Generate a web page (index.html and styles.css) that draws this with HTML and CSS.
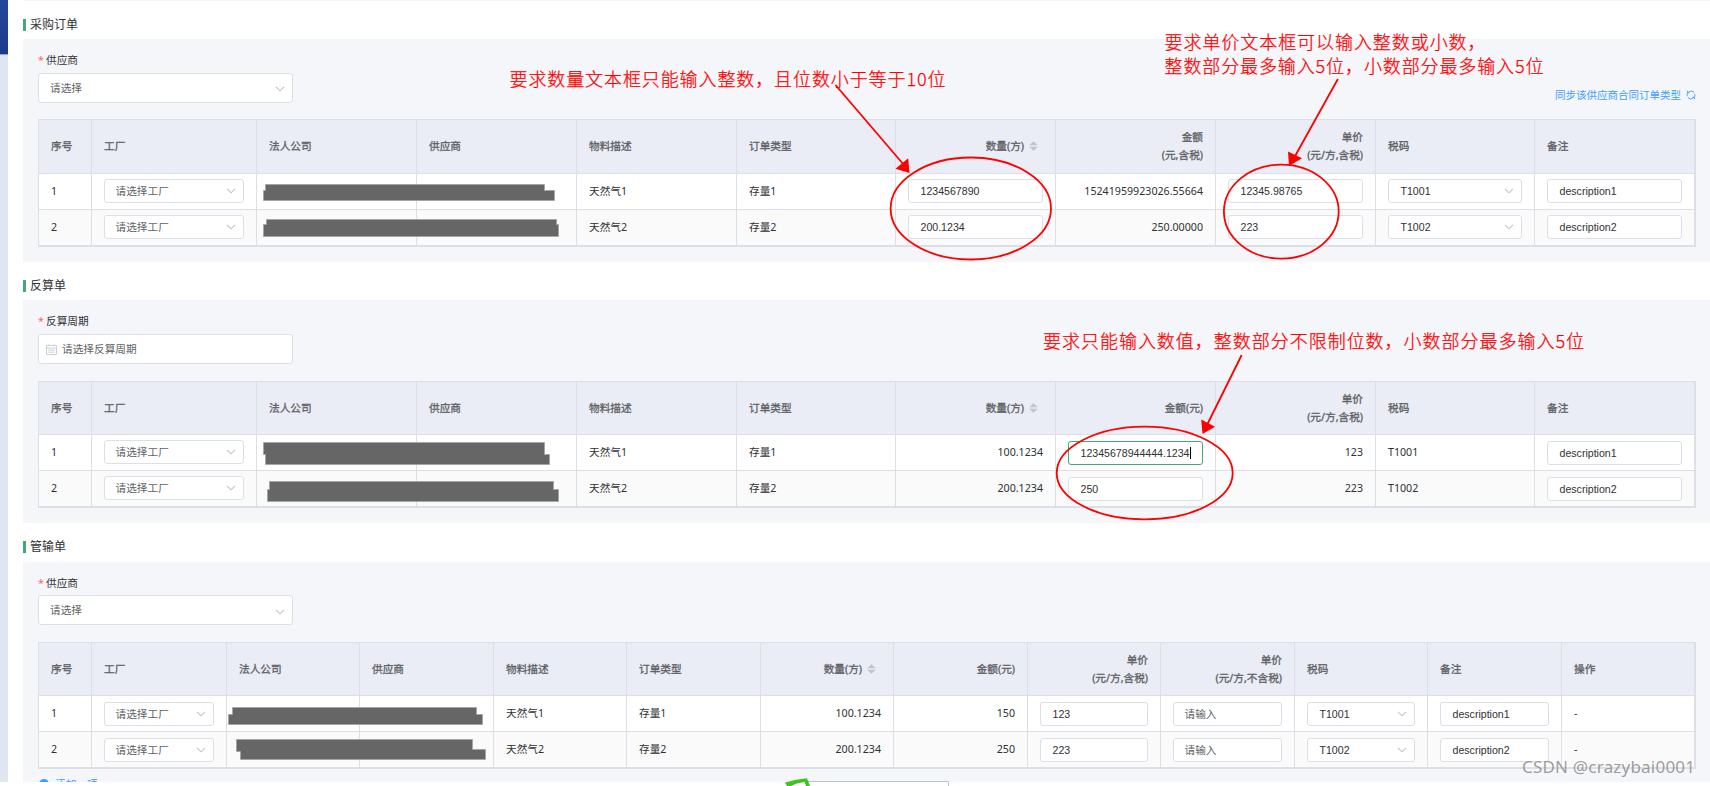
FILE: index.html
```
<!DOCTYPE html>
<html lang="zh-CN">
<head>
<meta charset="utf-8">
<title>采购订单</title>
<link rel="stylesheet" href="styles.css">
</head>
<body>
<svg width="0" height="0" class="defs">
  <symbol id="chev" viewBox="0 0 10 6"><path d="M1 .8 5 4.8 9 .8" fill="none" stroke="#c0c4cc" stroke-width="1.1"/></symbol>
  <symbol id="sort" viewBox="0 0 9 10"><path d="M4.500 .3 8.800 4.200H.2zM4.500 9.700 .2 5.800h8.600z" fill="#c0c4cc"/></symbol>
</svg>
<div class="page">
  <aside class="rail"><div class="rail-top"></div></aside>
  <main class="content">
    <div class="strip"></div>

    <h2 class="title">采购订单</h2>
    <section class="panel p1">
      <div class="label"><i>*</i>供应商</div>
      <div class="bar">
        <div class="field">请选择<svg class="chev"><use href="#chev"/></svg></div>
        <a class="sync">同步该供应商合同订单类型
          <svg width="10" height="10" viewBox="0 0 10 10" fill="none" stroke="#409eff" stroke-width=".9"><path d="M1.200 6.200A4 4 0 0 1 8 2.400M1.500 .8V2.800H3.500M8.800 3.800A4 4 0 0 1 2 7.600M8.500 9.200V7.200H6.500"/></svg>
        </a>
      </div>
      <div class="table cols-a">
        <div class="row head">
          <div>序号</div><div>工厂</div><div>法人公司</div><div>供应商</div><div>物料描述</div><div>订单类型</div>
          <div class="r">数量(方)<svg class="sort"><use href="#sort"/></svg></div><div class="r">金额<br>(元,含税)</div><div class="r">单价<br>(元/方,含税)</div><div>税码</div><div>备注</div>
        </div>
        <div class="row">
          <div>1</div><div><span class="in ph">请选择工厂<svg class="chev"><use href="#chev"/></svg></span></div><div></div><div></div><div>天然气1</div><div>存量1</div>
          <div><span class="in">1234567890</span></div><div class="r">15241959923026.55664</div><div><span class="in">12345.98765</span></div><div><span class="in">T1001<svg class="chev"><use href="#chev"/></svg></span></div><div><span class="in">description1</span></div>
        </div>
        <div class="row alt">
          <div>2</div><div><span class="in ph">请选择工厂<svg class="chev"><use href="#chev"/></svg></span></div><div></div><div></div><div>天然气2</div><div>存量2</div>
          <div><span class="in">200.1234</span></div><div class="r">250.00000</div><div><span class="in">223</span></div><div><span class="in">T1002<svg class="chev"><use href="#chev"/></svg></span></div><div><span class="in">description2</span></div>
        </div>
      </div>
    </section>

    <h2 class="title">反算单</h2>
    <section class="panel p2">
      <div class="label"><i>*</i>反算周期</div>
      <div class="field date">
        <svg width="11" height="11" viewBox="0 0 11 11" fill="none" stroke="#c6cad2" stroke-width=".9"><path d="M.5 1.500H10.500V10.500H.5zM.5 4H10.500M3 .3V2.200M8 .3V2.200M2.300 6H8.700M2.300 8.200H8.700"/></svg>请选择反算周期</div>
      <div class="table cols-a">
        <div class="row head">
          <div>序号</div><div>工厂</div><div>法人公司</div><div>供应商</div><div>物料描述</div><div>订单类型</div>
          <div class="r">数量(方)<svg class="sort"><use href="#sort"/></svg></div><div class="r">金额(元)</div><div class="r">单价<br>(元/方,含税)</div><div>税码</div><div>备注</div>
        </div>
        <div class="row">
          <div>1</div><div><span class="in ph">请选择工厂<svg class="chev"><use href="#chev"/></svg></span></div><div></div><div></div><div>天然气1</div><div>存量1</div>
          <div class="r">100.1234</div><div><span class="in low focus">12345678944444.1234<b class="caret"></b></span></div><div class="r">123</div><div>T1001</div><div><span class="in low">description1</span></div>
        </div>
        <div class="row alt">
          <div>2</div><div><span class="in ph">请选择工厂<svg class="chev"><use href="#chev"/></svg></span></div><div></div><div></div><div>天然气2</div><div>存量2</div>
          <div class="r">200.1234</div><div><span class="in low">250</span></div><div class="r">223</div><div>T1002</div><div><span class="in low">description2</span></div>
        </div>
      </div>
    </section>

    <h2 class="title tall">管输单</h2>
    <section class="panel p3">
      <div class="label"><i>*</i>供应商</div>
      <div class="field">请选择<svg class="chev"><use href="#chev"/></svg></div>
      <div class="table cols-b">
        <div class="row head">
          <div>序号</div><div>工厂</div><div>法人公司</div><div>供应商</div><div>物料描述</div><div>订单类型</div>
          <div class="r">数量(方)<svg class="sort"><use href="#sort"/></svg></div><div class="r">金额(元)</div><div class="r">单价<br>(元/方,含税)</div><div class="r">单价<br>(元/方,不含税)</div><div>税码</div><div>备注</div><div>操作</div>
        </div>
        <div class="row">
          <div>1</div><div><span class="in ph">请选择工厂<svg class="chev"><use href="#chev"/></svg></span></div><div></div><div></div><div>天然气1</div><div>存量1</div>
          <div class="r">100.1234</div><div class="r">150</div><div><span class="in">123</span></div><div><span class="in ph">请输入</span></div><div><span class="in">T1001<svg class="chev"><use href="#chev"/></svg></span></div><div><span class="in">description1</span></div><div>-</div>
        </div>
        <div class="row alt">
          <div>2</div><div><span class="in ph">请选择工厂<svg class="chev"><use href="#chev"/></svg></span></div><div></div><div></div><div>天然气2</div><div>存量2</div>
          <div class="r">200.1234</div><div class="r">250</div><div><span class="in">223</span></div><div><span class="in ph">请输入</span></div><div><span class="in">T1002<svg class="chev"><use href="#chev"/></svg></span></div><div><span class="in">description2</span></div><div>-</div>
        </div>
      </div>
      <div class="add"><svg width="10" height="10" viewBox="0 0 10 10"><circle cx="5" cy="5" r="5" fill="#409eff"/></svg>添加一项</div>
    </section>
  </main>
</div>

<svg class="marks" width="1710" height="786" viewBox="0 0 1710 786">
  <g fill="#666" stroke="#a6a6a6">
    <path d="M265.500 184.500H544.500V190.500H554.500V200.500H263.500V190.500H265.500z"/>
    <path d="M266.500 219.500H556.500V224.500H558.500V236.500H263.500V224.500H266.500z"/>
    <path d="M263.500 442.500H544.500V454.500H549.500V464.500H265.500V454.500H263.500z"/>
    <path d="M269.500 481.500H553.500V489.500H558.500V501.500H267.500V489.500H269.500z"/>
    <path d="M232.500 707.500H476.500V714.500H482.500V724.500H228.500V714.500H232.500z"/>
    <path d="M236.500 739.500H472.500V749.500H485.500V759.500H240.500V751.500H236.500z"/>
  </g>
  <g fill="none" stroke="#f00" stroke-width="1.800">
    <ellipse cx="970.800" cy="208.500" rx="80.200" ry="51"/>
    <ellipse cx="1281.300" cy="211.600" rx="57.400" ry="47"/>
    <ellipse cx="1144.700" cy="473" rx="88" ry="46.400"/>
    <path d="M835.500 85 904 165M1337.900 79 1294 158M1241.700 355 1206 427"/>
  </g>
  <path fill="#f00" d="M895.500 168.800 908.200 158.300 909.500 173zM1302 158.300 1288 151.500 1289 166zM1201.200 419.500 1215 426.700 1202.500 434z"/>
  <g class="note">
    <text x="509.500" y="86" textLength="436" lengthAdjust="spacing">要求数量文本框只能输入整数，且位数小于等于10位</text>
    <text x="1164.500" y="49" textLength="321" lengthAdjust="spacing">要求单价文本框可以输入整数或小数，</text>
    <text x="1164.500" y="73" textLength="379" lengthAdjust="spacing">整数部分最多输入5位，小数部分最多输入5位</text>
    <text x="1043" y="347.500" textLength="541" lengthAdjust="spacing">要求只能输入数值，整数部分不限制位数，小数部分最多输入5位</text>
  </g>
  <path d="M807 781.500H948.500V786" fill="none" stroke="#b3c6d3"/>
  <path d="M785 782.500Q796 779 807 778.300L810 786H806L804.500 782Q796 783 791 786H787z" fill="#3fc422"/>
  <text class="mark" x="1522" y="773" textLength="173" lengthAdjust="spacing">CSDN @crazybai0001</text>
</svg>
</body>
</html>
```
FILE: styles.css
```
body {
  margin: 0;
  width: 1710px;
  height: 786px;
  overflow: hidden;
  position: relative;
  background: #fff;
  color: #303133;
  font: 10.67px/18px "Noto Sans", "Noto Sans CJK SC", sans-serif;
}
.defs { position: absolute; }
.page { display: flex; height: 782px; overflow: hidden; }
.rail { width: 8px; margin-right: 15px; background: #dfe6f2; }
.rail-top { height: 55px; background: linear-gradient(#24479a, #1c3b89); border-bottom: 1px solid #8fa3cc; box-sizing: border-box; }
.content { flex: 1; }
.strip { height: 1px; background: #f5f6fa; }

.title {
  display: flex;
  align-items: center;
  box-sizing: border-box;
  height: 38px;
  margin: 0;
  padding-top: 9px;
  font-size: 12px;
  font-weight: 400;
}
.title::before { content: ""; width: 3px; height: 12px; margin-right: 4px; background: #42a77d; }
.title.tall { height: 39px; }

.panel { box-sizing: border-box; padding: 0 14px 0 15px; background: #f5f6fa; overflow: hidden; }
.p1, .p2 { height: 223px; }
.p3 { height: 220px; }
.label { display: flex; align-items: center; box-sizing: border-box; height: 34px; padding-top: 8px; }
.p3 .label { height: 33px; }
.label i { width: 8px; color: #f56c6c; font-style: normal; }
.bar { display: flex; justify-content: space-between; align-items: center; height: 30px; }
.field {
  display: flex;
  align-items: center;
  box-sizing: border-box;
  width: 255px;
  height: 30px;
  padding: 0 7px 0 11px;
  border: 1px solid #dcdfe6;
  border-radius: 3px;
  background: #fff;
  color: #606266;
}
.field.date { padding-left: 7px; gap: 5px; }
.chev { width: 10px; height: 6px; margin-left: auto; }
.field .chev { margin-top: 2px; }
.p3 .field .chev { margin-top: 4px; }
.sync { display: flex; align-items: center; gap: 5px; padding-top: 14px; color: #409eff; font-size: 10.5px; }

.table {
  margin-top: 16px;
  border: solid #dcdfe6;
  border-width: 1px 0 1px 1px;
}
.p2 .table, .p3 .table { margin-top: 17px; }
.row { display: grid; height: 36px; background: #fff; }
.cols-a .row { grid-template-columns: 53px 165px 160px 160px 160px 159px 160px 160px 160px 159px 161px; }
.cols-b .row { grid-template-columns: 53px 135px 133px 134px 133px 134px 133px 134px 133px 134px 133px 134px 134px; }
.row.alt { background: #fafafa; }
.row.head { height: 53px; background: #eaedf5; color: #606266; -webkit-text-stroke: .3px #606266; }
.p1 .row.head { height: 54px; }
.row > div {
  display: flex;
  align-items: center;
  box-sizing: border-box;
  min-width: 0;
  padding: 0 12px;
  border: solid #dcdfe6;
  border-width: 0 1px 1px 0;
}
.row:not(.head) > div { padding-bottom: 1px; }
.p1 .row.head > div { padding-bottom: 1px; }
.row > div:last-child { border-right-width: 2px; }
.row > .r { justify-content: flex-end; text-align: right; }
.sort { width: 9px; height: 10px; margin: 0 5px; }
.in {
  position: relative;
  display: flex;
  align-items: center;
  flex: 1;
  box-sizing: border-box;
  height: 24px;
  padding: 0 7px 0 11.5px;
  border: 1px solid #dcdfe6;
  border-radius: 3px;
  background: #fff;
  font-family: "Liberation Sans", "Noto Sans CJK SC", sans-serif;
  font-size: 10.6px;
}
.in.low, .p3 .in { top: 1px; }
.in.ph { color: #606266; font-size: 10.67px; padding-left: 10.5px; }
.in.focus { border-color: #42a77d; }
.caret { width: 1px; height: 12px; background: #000; }
.add { display: flex; align-items: center; gap: 6px; padding: 6px 0 0 1px; color: #409eff; }

.marks { position: absolute; left: 0; top: 0; }
.note { font: 300 18px "Noto Sans CJK SC", sans-serif; fill: #f00; stroke: #f00; stroke-width: .25px; }
.mark { font: 17px "Noto Sans", sans-serif; fill: #8c8c8c; fill-opacity: .85; }
```
